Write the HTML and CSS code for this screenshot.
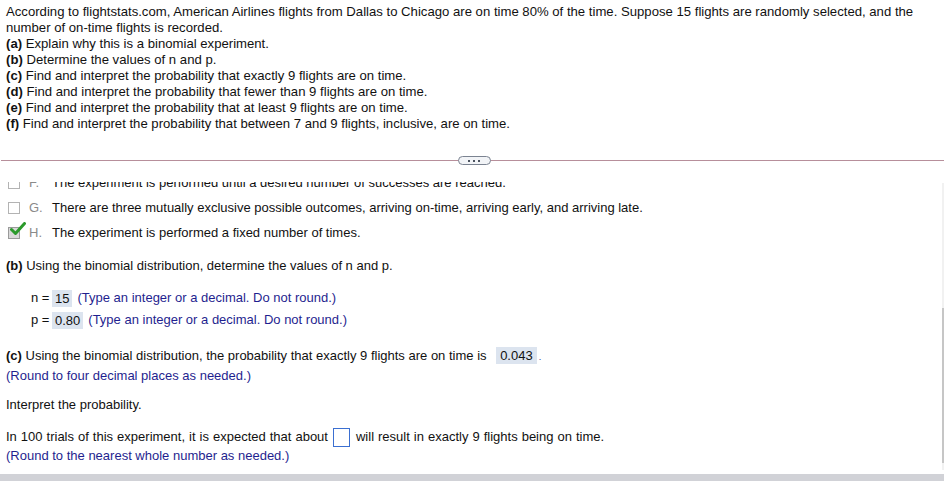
FILE: index.html
```html
<!DOCTYPE html>
<html lang="en">
<head>
    <meta charset="UTF-8">
    <meta name="viewport" content="width=device-width, initial-scale=1.0">
    <title>Binomial Experiment</title>
    <link rel="stylesheet" href="styles.css">
</head>
<body>
    <div class="problem">
        <p>According to flightstats.com, American Airlines flights from Dallas to Chicago are on time 80% of the time. Suppose 15 flights are randomly selected, and the number of on-time flights is recorded.</p>
        <p><b>(a)</b> Explain why this is a binomial experiment.</p>
        <p><b>(b)</b> Determine the values of n and p.</p>
        <p><b>(c)</b> Find and interpret the probability that exactly 9 flights are on time.</p>
        <p><b>(d)</b> Find and interpret the probability that fewer than 9 flights are on time.</p>
        <p><b>(e)</b> Find and interpret the probability that at least 9 flights are on time.</p>
        <p><b>(f)</b> Find and interpret the probability that between 7 and 9 flights, inclusive, are on time.</p>
    </div>

    <div class="divider">
        <button class="more-btn" type="button"><span></span><span></span><span></span></button>
    </div>

    <div class="answer-pane">
        <div class="answer-content">
            <div class="choice first">
                <span class="box"></span>
                <span class="letter">F.</span>
                <span>The experiment is performed until a desired number of successes are reached.</span>
            </div>
            <div class="choice">
                <span class="box"></span>
                <span class="letter">G.</span>
                <span>There are three mutually exclusive possible outcomes, arriving on-time, arriving early, and arriving late.</span>
            </div>
            <div class="choice">
                <span class="box checked">
                    <svg class="tick" width="16" height="14" viewBox="0 0 16 14">
                        <path d="M1.5 7.5 L5.5 11.5 L14.5 1.5" fill="none" stroke="#2b9a2b" stroke-width="3" stroke-linecap="round" stroke-linejoin="round"/>
                    </svg>
                </span>
                <span class="letter">H.</span>
                <span>The experiment is performed a fixed number of times.</span>
            </div>

            <p class="part-b"><b>(b)</b> Using the binomial distribution, determine the values of n and p.</p>

            <div class="value-row first-value">
                <span class="var">n =</span>
                <span class="ans">15</span>
                <span class="hint">(Type an integer or a decimal. Do not round.)</span>
            </div>
            <div class="value-row">
                <span class="var">p =</span>
                <span class="ans">0.80</span>
                <span class="hint">(Type an integer or a decimal. Do not round.)</span>
            </div>

            <p class="part-c"><b>(c)</b> Using the binomial distribution, the probability that exactly 9 flights are on time is <span class="ans">0.043</span><span class="dot">.</span></p>
            <p class="hint">(Round to four decimal places as needed.)</p>

            <p class="interpret">Interpret the probability.</p>

            <p class="trials">In 100 trials of this experiment, it is expected that about <span class="blank"></span> will result in exactly 9 flights being on time.</p>
            <p class="hint">(Round to the nearest whole number as needed.)</p>
        </div>
        <div class="scrollbar"><div class="thumb"></div></div>
    </div>

    <div class="bottom-bar"></div>
</body>
</html>
```

FILE: styles.css
```css
body {
    margin: 0;
    font-family: "Liberation Sans", Arial, sans-serif;
    font-size: 13px;
    color: #111;
    background: #fff;
    overflow: hidden;
}
p {
    margin: 0;
}
b {
    font-weight: bold;
}
.problem {
    padding: 4px 20px 0 6px;
    line-height: 16px;
    font-size: 13.15px;
}
.divider {
    height: 9px;
    margin-top: 24px;
    display: flex;
    justify-content: center;
    align-items: center;
    background: linear-gradient(#b78f9b, #b78f9b) 1px 4px / 943px 1px no-repeat;
}
.more-btn {
    width: 33px;
    height: 9px;
    padding: 0;
    margin-left: 4px;
    border: 1.5px solid #7b8391;
    border-radius: 5px;
    background: #f2f4f7;
    display: flex;
    justify-content: center;
    align-items: center;
    gap: 3px;
}
.more-btn span {
    width: 2px;
    height: 2px;
    background: #4c5360;
}
.answer-pane {
    height: 292px;
    margin-top: 17px;
    overflow: hidden;
    display: flex;
}
.answer-content {
    flex: 1;
    padding-left: 6px;
    line-height: 16px;
}
.choice {
    height: 25px;
    display: flex;
    align-items: center;
    white-space: nowrap;
}
.choice.first {
    margin-top: -12px;
}
.box {
    position: relative;
    width: 10px;
    height: 10px;
    margin-left: 2px;
    border: 1px solid #b3b3b3;
    background: #fff;
    flex-shrink: 0;
}
.box.checked {
    background: #d9d9d9;
    border-color: #9a9a9a;
}
.tick {
    position: absolute;
    left: 1px;
    top: -6px;
}
.letter {
    width: 23px;
    margin-left: 9px;
    color: #8a8a8a;
}
.part-b {
    margin-top: 13px;
}
.value-row {
    height: 22px;
    display: flex;
    align-items: center;
    padding-left: 25px;
}
.value-row.first-value {
    margin-top: 13px;
}
.var {
    width: 21px;
}
.ans {
    display: inline-block;
    background: #dce4ef;
    padding: 0 3px;
    line-height: 17px;
    margin-right: 5px;
}
.hint {
    color: #1f1f8f;
}
.part-c {
    margin-top: 15px;
    line-height: 20px;
}
.part-c .ans {
    margin-left: 6px;
    padding: 0 4px;
    margin-right: 2px;
}
.dot {
    color: #1f1f8f;
    font-size: 9px;
}
.part-c + .hint {
    margin-top: 1px;
}
.interpret {
    margin-top: 13px;
}
.trials {
    margin-top: 13px;
    line-height: 22px;
    word-spacing: 0.4px;
}
.blank {
    display: inline-block;
    width: 15px;
    height: 17px;
    border: 1px solid #3b6fd1;
    vertical-align: middle;
    margin: 0 2px 0 1px;
}
.scrollbar {
    width: 2px;
    margin: 1px 0 4px;
    background: #f1f1f1;
    display: flex;
    flex-direction: column;
    justify-content: flex-end;
    padding-bottom: 7px;
}
.thumb {
    height: 155px;
    background: #c6c6c6;
}
.bottom-bar {
    height: 7px;
    background: #d1d2d7;
}
```
